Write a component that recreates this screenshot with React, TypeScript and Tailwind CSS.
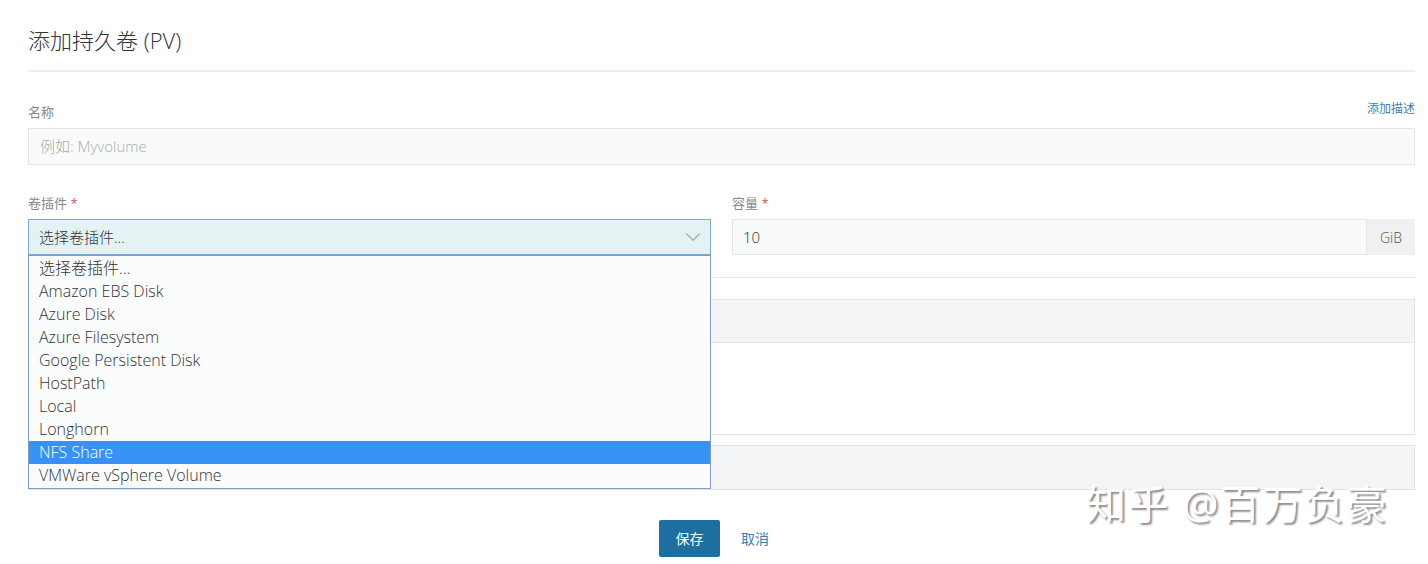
import { ChevronDown } from "lucide-react";

const plugins = [
  "选择卷插件...",
  "Amazon EBS Disk",
  "Azure Disk",
  "Azure Filesystem",
  "Google Persistent Disk",
  "HostPath",
  "Local",
  "Longhorn",
  "NFS Share",
  "VMWare vSphere Volume",
];

const font = "font-['Open_Sans','Noto_Sans_CJK_SC',sans-serif]";

export default function App() {
  return (
    <div className={`relative min-h-[564px] bg-white pl-[28px] pr-[13px] pt-[25px] text-[#333] ${font}`}>
      {/* header */}
      <h1 className="text-[22px] font-light leading-[30px] text-[#333]">添加持久卷 (PV)</h1>
      <div className="mt-[15px] h-[2px] bg-[#eceeef]" />

      {/* name */}
      <div className="mt-[30px] flex items-start justify-between">
        <label className="text-[13px] leading-[20px] text-[#888]">名称</label>
        <a className="-mt-[1px] text-[12px] leading-[16px] text-[#3f7fae]">添加描述</a>
      </div>
      <div className="mt-[6px] flex h-[37px] items-center border border-[#e3e6e8] bg-[#f9fbfb] px-[11px] text-[15px] font-light text-[#a8abad]">
        例如: Myvolume
      </div>

      {/* plugin + size */}
      <div className="mt-[25px] flex gap-[21px]">
        <div className="relative w-[683px]">
          <label className="text-[13px] leading-[20px] text-[#888]">
            卷插件 <span className="text-[#d9534f]">*</span>
          </label>
          <div className="mt-[5px] flex h-[36px] items-center justify-between border border-[#7fa8d4] bg-[#e4f2f4] pl-[10px] pr-[4px] text-[15px] font-light text-[#333]">
            <span>选择卷插件...</span>
            <ChevronDown className="h-[26px] w-[26px] text-[#a3abb0]" strokeWidth={1} />
          </div>

          {/* open native list */}
          <ul className="absolute left-0 right-0 top-[65px] z-10 border border-[#7f9dc4] bg-[#fafcfc] py-[1px]">
            {plugins.map((p) => (
              <li
                key={p}
                className={`h-[23px] px-[10px] text-[16px] font-light leading-[23px] ${
                  p === "NFS Share" ? "bg-[#3891f4] text-white" : "text-[#333]"
                }`}
              >
                {p}
              </li>
            ))}
          </ul>
        </div>

        <div className="flex-1">
          <label className="text-[13px] leading-[20px] text-[#888]">
            容量 <span className="text-[#d9534f]">*</span>
          </label>
          <div className="mt-[5px] flex h-[36px]">
            <div className="flex flex-1 items-center border border-[#e3e6e8] bg-[#f9fbfb] px-[10px] text-[15px] font-light text-[#333]">
              10
            </div>
            <div className="flex w-[48px] items-center justify-center bg-[#eef0f1] text-[14px] font-light text-[#555]">GiB</div>
          </div>
        </div>
      </div>

      {/* sections hidden behind list */}
      <div className="mt-[22px] h-[1px] bg-[#e6e9eb]" />
      <div className="mt-[21px] border border-[#e1e4e6]">
        <div className="h-[43px] border-b border-[#e1e4e6] bg-[#f2f4f5]" />
        <div className="h-[91px] bg-white" />
      </div>
      <div className="mt-[10px] h-[45px] border border-[#e1e4e6] bg-[#f2f4f5]" />

      {/* actions */}
      <div className="mt-[30px] flex items-center justify-center gap-[21px] pr-[15px]">
        <button className="h-[37px] w-[61px] rounded-[2px] bg-[#1c6fa0] text-[14px] text-white">保存</button>
        <button className="text-[14px] text-[#3a7bb0]">取消</button>
      </div>

      {/* watermark */}
      <div className="pointer-events-none absolute left-[1086px] top-[480px] text-[40px] leading-[48px] tracking-[2px] text-white [text-shadow:2px_2px_2px_#8a8a8a]">
        知乎 @百万负豪
      </div>
    </div>
  );
}
